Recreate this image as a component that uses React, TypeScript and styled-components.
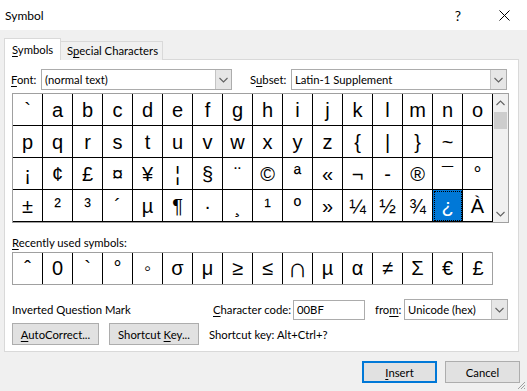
import React from "react";
import styled, { createGlobalStyle, css } from "styled-components";

const GlobalStyle = createGlobalStyle`
  html, body {
    margin: 0;
    padding: 0;
    background: #f0f0f0;
  }
  * {
    box-sizing: border-box;
  }
`;

const Window = styled.div`
  position: relative;
  width: 527px;
  height: 391px;
  display: flex;
  flex-direction: column;
  background: #f0f0f0;
  font-family: Lato, "Noto Sans", sans-serif;
  font-size: 11.3px;
  color: #000;
  overflow: hidden;
`;

const TitleBar = styled.div`
  height: 30px;
  flex: none;
  display: flex;
  align-items: center;
  padding-left: 5px;
  background: #fff;
  font-size: 12px;
`;

const TitleButtons = styled.div`
  margin-left: auto;
  display: flex;
  align-items: center;
  height: 100%;
`;

const TitleButton = styled.div`
  width: 46px;
  height: 100%;
  display: flex;
  align-items: center;
  justify-content: center;
  font-size: 14px;
`;

const Body = styled.div`
  flex: 1;
  display: flex;
  flex-direction: column;
  padding: 8px 8px 0 4px;
`;

const TabStrip = styled.div`
  display: flex;
  align-items: flex-end;
  height: 22px;
  margin-bottom: -1px;
  position: relative;
  z-index: 1;
`;

const Tab = styled.div<{ $active?: boolean }>`
  display: flex;
  align-items: center;
  border: 1px solid #d9d9d9;
  border-bottom: none;
  white-space: nowrap;
  ${(p) =>
    p.$active
      ? css`
          width: 57px;
          height: 22px;
          padding-left: 7px;
          background: #fff;
        `
      : css`
          width: 102px;
          height: 19px;
          padding: 0 0 1px 6px;
          border-left: none;
          background: #f0f0f0;
        `}
`;

const Panel = styled.div`
  width: 515px;
  height: 293px;
  display: flex;
  flex-direction: column;
  background: #fff;
  border: 1px solid #d9d9d9;
  padding: 9px 11px 0 7px;
`;

const Row = styled.div<{ $mt?: number; $h?: number }>`
  display: flex;
  align-items: center;
  height: ${(p) => p.$h ?? 21}px;
  margin-top: ${(p) => p.$mt ?? 0}px;
  white-space: nowrap;
`;

const Label = styled.span<{ $w?: number; $ml?: number }>`
  display: inline-block;
  width: ${(p) => (p.$w ? `${p.$w}px` : "auto")};
  margin-left: ${(p) => p.$ml ?? 0}px;
  flex: none;
`;

const Select = styled.div<{ $w: number }>`
  width: ${(p) => p.$w}px;
  height: 21px;
  flex: none;
  display: flex;
  align-items: center;
  border: 1px solid #acacac;
  background: #fff;
  padding-left: 3px;
`;

const SelectText = styled.span`
  flex: 1;
`;

const SelectArrow = styled.div`
  width: 16px;
  height: 19px;
  display: flex;
  align-items: center;
  justify-content: center;
  background: #e6e6e6;
  border-left: 1px solid #c4c4c4;
`;

const TextInput = styled.div<{ $w: number }>`
  width: ${(p) => p.$w}px;
  height: 20px;
  flex: none;
  display: flex;
  align-items: center;
  border: 1px solid #acacac;
  padding-left: 3px;
`;

const GridFrame = styled.div`
  display: flex;
  width: 497px;
  margin-top: 3px;
  border: 1px solid #a0a0a0;
`;

const SymbolGrid = styled.div<{ $rows: number }>`
  display: grid;
  grid-template-columns: repeat(16, 30px);
  grid-template-rows: repeat(${(p) => p.$rows}, 32px);
`;

const Cell = styled.div<{ $selected?: boolean }>`
  display: flex;
  align-items: center;
  justify-content: center;
  border-right: 1px solid #000;
  border-bottom: 1px solid #000;
  font-family: "Liberation Sans", Arial, sans-serif;
  font-size: 20px;
  line-height: 1;
  ${(p) =>
    p.$selected &&
    css`
      background: #0078d7;
      color: #fff;
      outline: 1px dotted #000;
      outline-offset: -2px;
    `}
`;

const Scrollbar = styled.div`
  width: 16px;
  display: flex;
  flex-direction: column;
  background: #f0f0f0;
`;

const ScrollArrow = styled.div`
  height: 17px;
  display: flex;
  align-items: center;
  justify-content: center;
`;

const ScrollTrack = styled.div`
  flex: 1;
  padding-top: 1px;
`;

const ScrollThumb = styled.div`
  height: 17px;
  margin: 0 1px;
  background: #cdcdcd;
`;

const RecentFrame = styled.div`
  display: flex;
  width: 481px;
  height: 33px;
  border: 1px solid #a0a0a0;
  margin-top: 2px;
`;

const RecentCell = styled.div<{ $big?: boolean }>`
  width: 30px;
  flex: none;
  display: flex;
  align-items: center;
  justify-content: center;
  border-right: 1px solid #000;
  font-family: "Liberation Sans", Arial, sans-serif;
  font-size: ${(p) => (p.$big ? 27 : 20)}px;
  &:last-child {
    border-right: none;
  }
`;

const Button = styled.div<{ $w: number; $default?: boolean }>`
  width: ${(p) => p.$w}px;
  height: 22px;
  flex: none;
  display: flex;
  align-items: center;
  justify-content: center;
  background: #e1e1e1;
  border: 1px solid #adadad;
  ${(p) =>
    p.$default &&
    css`
      border-color: #0078d7;
      box-shadow: inset 0 0 0 1px #0078d7;
    `}
`;

const Footer = styled.div`
  display: flex;
  justify-content: flex-end;
  gap: 8px;
  margin-top: 9px;
  margin-right: -1px;
`;

const Grip = styled.svg`
  position: absolute;
  right: 1px;
  bottom: 1px;
`;

const U = styled.span`
  text-decoration: underline;
  text-underline-offset: 2px;
`;

const Chevron = ({ up }: { up?: boolean }) => (
  <svg width="9" height="6" viewBox="0 0 9 6">
    <path
      d={up ? "M0.5 5 L4.5 1 L8.5 5" : "M0.5 1 L4.5 5 L8.5 1"}
      fill="none"
      stroke="#606060"
      strokeWidth="1.1"
    />
  </svg>
);

const rows = [
  ["`", "a", "b", "c", "d", "e", "f", "g", "h", "i", "j", "k", "l", "m", "n", "o"],
  ["p", "q", "r", "s", "t", "u", "v", "w", "x", "y", "z", "{", "|", "}", "~", ""],
  ["¡", "¢", "£", "¤", "¥", "¦", "§", "¨", "©", "ª", "«", "¬", "-", "®", "¯", "°"],
  ["±", "²", "³", "´", "µ", "¶", "·", "¸", "¹", "º", "»", "¼", "½", "¾", "¿", "À"],
];

const recent = ["ˆ", "0", "`", "°", "◦", "σ", "μ", "≥", "≤", "∩", "µ", "α", "≠", "Σ", "€", "£"];

export default function App() {
  return (
    <>
      <GlobalStyle />
      <Window>
        <TitleBar>
          Symbol
          <TitleButtons>
            <TitleButton>?</TitleButton>
            <TitleButton>
              <svg width="11" height="11" viewBox="0 0 11 11">
                <path d="M0.5 0.5 L10.5 10.5 M10.5 0.5 L0.5 10.5" stroke="#000" strokeWidth="1" />
              </svg>
            </TitleButton>
          </TitleButtons>
        </TitleBar>
        <Body>
          <TabStrip>
            <Tab $active>
              <span>
                <U>S</U>ymbols
              </span>
            </Tab>
            <Tab>
              <span>
                S<U>p</U>ecial Characters
              </span>
            </Tab>
          </TabStrip>
          <Panel>
            <Row>
              <Label $w={30} $ml={-1}>
                <U>F</U>ont:
              </Label>
              <Select $w={191}>
                <SelectText>(normal text)</SelectText>
                <SelectArrow>
                  <Chevron />
                </SelectArrow>
              </Select>
              <Label $w={41} $ml={18}>
                S<U>u</U>bset:
              </Label>
              <Select $w={216}>
                <SelectText>Latin-1 Supplement</SelectText>
                <SelectArrow>
                  <Chevron />
                </SelectArrow>
              </Select>
            </Row>
            <GridFrame>
              <SymbolGrid $rows={4}>
                {rows.flatMap((r, ri) =>
                  r.map((c, ci) => (
                    <Cell key={`${ri}-${ci}`} $selected={c === "¿"}>
                      {c}
                    </Cell>
                  ))
                )}
              </SymbolGrid>
              <Scrollbar>
                <ScrollArrow>
                  <Chevron up />
                </ScrollArrow>
                <ScrollTrack>
                  <ScrollThumb />
                </ScrollTrack>
                <ScrollArrow>
                  <Chevron />
                </ScrollArrow>
              </Scrollbar>
            </GridFrame>
            <Row $mt={11} $h={16}>
              <span>
                <U>R</U>ecently used symbols:
              </span>
            </Row>
            <RecentFrame>
              {recent.map((c, i) => (
                <RecentCell key={i} $big={c === "∩"}>
                  {c}
                </RecentCell>
              ))}
            </RecentFrame>
            <Row $mt={14}>
              <Label $w={201}>Inverted Question Mark</Label>
              <Label $w={80}>
                <U>C</U>haracter code:
              </Label>
              <TextInput $w={72}>00BF</TextInput>
              <Label $w={29} $ml={10}>
                fro<U>m</U>:
              </Label>
              <Select $w={104}>
                <SelectText>Unicode (hex)</SelectText>
                <SelectArrow>
                  <Chevron />
                </SelectArrow>
              </Select>
            </Row>
            <Row $mt={3} $h={22}>
              <Button $w={87}>
                <span>
                  <U>A</U>utoCorrect...
                </span>
              </Button>
              <Label $ml={10} />
              <Button $w={90}>
                <span>
                  Shortcut <U>K</U>ey...
                </span>
              </Button>
              <Label $ml={10}>Shortcut key: Alt+Ctrl+?</Label>
            </Row>
          </Panel>
          <Footer>
            <Button $w={75} $default>
              <span>
                <U>I</U>nsert
              </span>
            </Button>
            <Button $w={75}>Cancel</Button>
          </Footer>
        </Body>
        <Grip width="10" height="10" viewBox="0 0 10 10">
          <path d="M9 2 L2 9 M9 5 L5 9 M9 8 L8 9" stroke="#a0a0a0" strokeWidth="1" />
        </Grip>
      </Window>
    </>
  );
}
